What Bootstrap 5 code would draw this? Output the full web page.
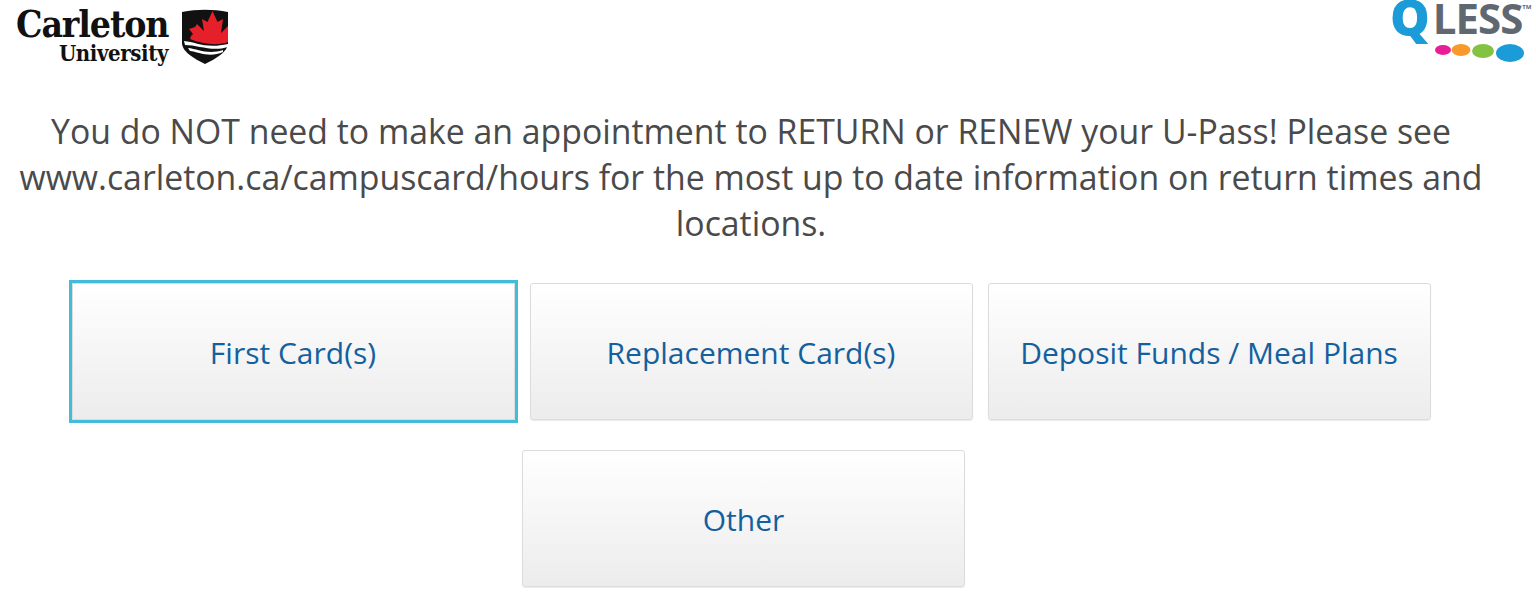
<!DOCTYPE html>
<html lang="en">
<head>
  <meta charset="UTF-8" />
  <meta name="viewport" content="width=device-width, initial-scale=1" />
  <title>Carleton University - QLess</title>
  <link href="https://cdn.jsdelivr.net/npm/bootstrap@5.3.0/dist/css/bootstrap.min.css" rel="stylesheet" />
  <style>
    body {
      background: #fff;
      font-family: "Open Sans", sans-serif;
      overflow: hidden;
    }
    .page-wrap {
      width: 1502px;
      height: 594px;
    }
    .top-bar {
      height: 66px;
    }
    .cu-logo {
      margin-left: 16px;
      margin-top: 6px;
      gap: 14px;
    }
    .cu-words {
      font-family: "DejaVu Serif Condensed", "DejaVu Serif", serif;
      color: #111;
      font-weight: 700;
      width: 152px;
    }
    .cu-name {
      font-size: 37px;
      line-height: 36px;
      letter-spacing: -1.100px;
      white-space: nowrap;
    }
    .cu-sub {
      font-size: 22px;
      line-height: 23px;
      letter-spacing: -.4px;
    }
    .cu-shield {
      margin-top: 3px;
    }
    .ql-logo {
      width: 146px;
      margin-right: -34px;
      font-weight: 700;
      color: #5f6870;
      line-height: 35px;
    }
    .ql-q {
      font-size: 50px;
      font-weight: 800;
      color: #1b9bd7;
    }
    .ql-less {
      font-size: 42px;
      letter-spacing: -1px;
      margin-left: 3px;
    }
    .ql-tm {
      font-size: 6px;
      align-self: flex-start;
      line-height: 14px;
    }
    .ql-dots {
      display: block;
      margin-top: 9px;
    }
    .notice {
      font-size: 33.800px;
      line-height: 46px;
      color: #4a4a4a;
      margin: 42px 0 37px;
    }
    .choice-wrap {
      gap: 30px 15px;
      padding-right: 2px;
    }
    .choice-btn {
      width: 443px;
      height: 137px;
      padding-top: 8px;
      font-size: 30px;
      color: #13609f;
      background: linear-gradient(#fff, #ececec);
      border: 1px solid #dcdcdc;
      border-radius: 3px;
      box-shadow: 0 1px 1px rgba(0, 0, 0, .08);
    }
    .choice-btn:hover {
      color: #13609f;
    }
    .choice-on {
      outline: 3px solid #41bcdc;
      border-radius: 0;
      margin-left: 2px;
    }
    .choice-last {
      margin-right: 13px;
    }
  </style>
</head>
<body>
  <div class="page-wrap">
    <div class="top-bar d-flex justify-content-between align-items-start">
      <div class="cu-logo d-flex">
        <div class="cu-words text-end">
          <div class="cu-name">Carleton</div>
          <div class="cu-sub">University</div>
        </div>
        <svg class="cu-shield" width="46" height="55" viewBox="0 0 46 55">
          <path d="M0 3C15 0 31 0 46 3V34C46 43 33 50 23 55C13 50 0 43 0 34Z" fill="#111" />
          <path d="M30.500 2L35.500 13L41 10L39 24L46 17V33C36 37 20 35 8 30L9 27L11 25L7 20L13 18L15 15L22 22L20 10L25.500 13Z" fill="#e5202a" />
          <path d="M2 32C14 33 24 40 46 35V38C30 43 16 36 3 36Z" fill="#fff" />
          <path d="M6 39C16 40 26 46 41 41V43C28 49 16 43 8 42Z" fill="#fff" />
        </svg>
      </div>
      <div class="ql-logo">
        <div class="d-flex align-items-center">
          <span class="ql-q">Q</span>
          <span class="ql-less">LESS</span>
          <span class="ql-tm">TM</span>
        </div>
        <svg class="ql-dots" width="146" height="24" viewBox="0 0 146 24">
          <ellipse cx="53" cy="6" rx="8" ry="5" fill="#e91e97" />
          <ellipse cx="71" cy="6" rx="9.500" ry="6" fill="#f79a2b" />
          <ellipse cx="93" cy="7" rx="11" ry="7" fill="#84c341" />
          <ellipse cx="120" cy="9" rx="14" ry="9" fill="#1b9bd7" />
        </svg>
      </div>
    </div>

    <p class="notice text-center">You do NOT need to make an appointment to RETURN or RENEW your U-Pass! Please see www.carleton.ca/campuscard/hours for the most up to date information on return times and locations.</p>

    <div class="choice-wrap d-flex flex-wrap justify-content-center">
      <button type="button" class="btn choice-btn choice-on">First Card(s)</button>
      <button type="button" class="btn choice-btn">Replacement Card(s)</button>
      <button type="button" class="btn choice-btn">Deposit Funds / Meal Plans</button>
      <button type="button" class="btn choice-btn choice-last">Other</button>
    </div>
  </div>
  <script src="https://cdn.jsdelivr.net/npm/bootstrap@5.3.0/dist/js/bootstrap.bundle.min.js"></script>
</body>
</html>
